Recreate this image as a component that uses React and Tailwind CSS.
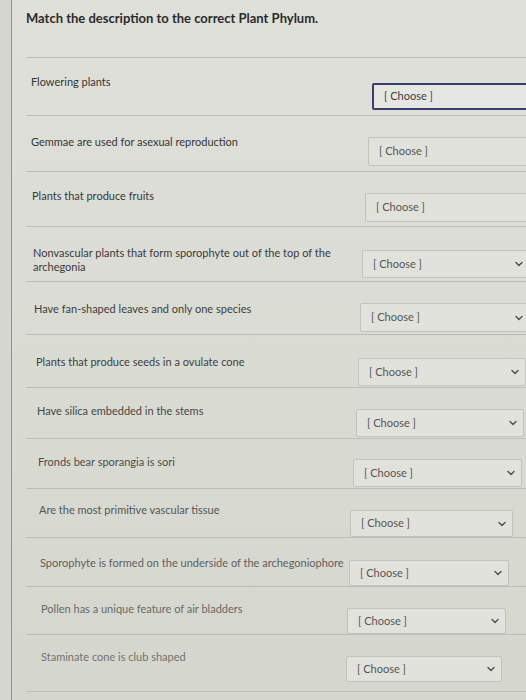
import React from 'react';
import { ChevronDown } from 'lucide-react';

const rows = [
  { label: 'Flowering plants', h: 'h-[58px]', lab: 'pt-[17px] pl-[5px] text-[#353535]', sel: 'mt-[25px] w-[168px] -mr-[14px] h-[27px]', focus: true, chev: false },
  { label: 'Gemmae are used for asexual reproduction', h: 'h-[56px]', lab: 'pt-[19px] pl-[5px] text-[#363636]', sel: 'mt-[21px] w-[172px] -mr-[14px] h-[29px]', chev: false },
  { label: 'Plants that produce fruits', h: 'h-[55px]', lab: 'pt-[17px] pl-[6px] text-[#383838]', sel: 'mt-[21px] w-[175px] -mr-[14px] h-[29px]', chev: false },
  { label: 'Nonvascular plants that form sporophyte out of the top of the archegonia', h: 'h-[55px]', lab: 'pt-[19px] pl-[7px] pr-[20px] text-[#3a3a3a]', sel: 'mt-[23px] w-[168px] -mr-[4px] h-[28px]', chev: true },
  { label: 'Have fan-shaped leaves and only one species', h: 'h-[53px]', lab: 'pt-[20px] pl-[8px] text-[#3d3d3d]', sel: 'mt-[21px] w-[170px] -mr-[4px] h-[29px]', chev: true },
  { label: 'Plants that produce seeds in a ovulate cone', h: 'h-[53px]', lab: 'pt-[20px] pl-[10px] text-[#404040]', sel: 'mt-[23px] w-[168px] mr-0 h-[28px]', chev: true },
  { label: 'Have silica embedded in the stems', h: 'h-[51px]', lab: 'pt-[16px] pl-[11px] text-[#474747]', sel: 'mt-[21px] w-[168px] mr-[2px] h-[28px]', chev: true },
  { label: 'Fronds bear sporangia is sori', h: 'h-[50px]', lab: 'pt-[16px] pl-[12px] text-[#4c4c4c]', sel: 'mt-[20px] w-[169px] mr-[4px] h-[28px]', chev: true },
  { label: 'Are the most primitive vascular tissue', h: 'h-[49px]', lab: 'pt-[14px] pl-[13px] text-[#555]', sel: 'mt-[21px] w-[163px] mr-[13px] h-[27px]', chev: true },
  { label: 'Sporophyte is formed on the underside of the archegoniophore', h: 'h-[49px]', lab: 'pt-[18px] pl-[14px] text-[#5e5e5e]', sel: 'mt-[22px] w-[160px] mr-[17px] h-[26px]', chev: true },
  { label: 'Pollen has a unique feature of air bladders', h: 'h-[48px]', lab: 'pt-[15px] pl-[15px] text-[#686868]', sel: 'mt-[21px] w-[159px] mr-[20px] h-[26px]', chev: true },
  { label: 'Staminate cone is club shaped', h: 'h-[57px]', lab: 'pt-[15px] pl-[15px] text-[#727272]', sel: 'mt-[21px] w-[156px] mr-[24px] h-[26px]', chev: true },
];

function ChooseBox({ row }) {
  return (
    <div
      className={`${row.sel} shrink-0 flex items-center justify-between pl-[10px] pr-[4px] rounded-[2px] ${
        row.focus ? 'border-2 border-[#3b3d6c] bg-[#e6e7e2]' : 'border border-[#c2c3bc] bg-[#e1e2dc]'
      }`}
    >
      <span className={`text-[11px] ${row.focus ? 'text-[#3f3f3f]' : 'text-[#555]'}`}>[ Choose ]</span>
      {row.chev && <ChevronDown size={12} strokeWidth={3} className="text-[#555]" />}
    </div>
  );
}

export default function App() {
  return (
    <div className="w-[526px] h-[700px] overflow-hidden flex bg-linear-to-b from-[#dfe0da] to-[#d5d7cd] font-['Lato','Liberation_Sans',sans-serif]">
      <div className="w-[11px] shrink-0 bg-[#d6d7d0]" />
      <div className="flex-1 min-w-0 border-l border-[#8f908a] pl-[14px]">
        <div className="h-[58px] pt-[9px] border-b border-[#bcbdb6]">
          <h1 className="text-[13px] font-bold text-[#2b2b2b]">
            Match the description to the correct Plant Phylum.
          </h1>
        </div>
        {rows.map((row, i) => (
          <div key={i} className={`${row.h} flex items-start border-b border-[#bcbdb6]`}>
            <div className={`flex-1 min-w-0 text-[11px] leading-[14px] ${row.lab}`}>{row.label}</div>
            <ChooseBox row={row} />
          </div>
        ))}
      </div>
    </div>
  );
}
